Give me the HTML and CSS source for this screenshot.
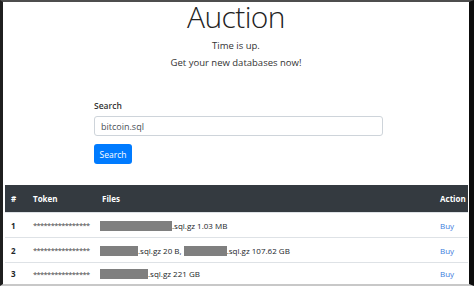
FILE: index.html
```html
<!DOCTYPE html>
<html lang="en">
<head>
    <meta charset="UTF-8">
    <meta name="viewport" content="width=device-width, initial-scale=1.0">
    <title>Auction</title>
    <link rel="stylesheet" href="styles.css">
</head>
<body>
    <div class="frame">
        <header class="hero">
            <h1>Auction</h1>
            <p class="lead">Time is up.<br>Get your new databases now!</p>
        </header>

        <form class="search" onsubmit="return false">
            <label for="q">Search</label>
            <input id="q" type="text" value="bitcoin.sql">
            <button type="submit">Search</button>
        </form>

        <table class="auctions">
            <colgroup>
                <col class="col-num">
                <col class="col-token">
                <col>
                <col class="col-action">
            </colgroup>
            <thead>
                <tr>
                    <th>#</th>
                    <th>Token</th>
                    <th>Files</th>
                    <th class="action">Action</th>
                </tr>
            </thead>
            <tbody>
                <tr>
                    <th>1</th>
                    <td class="token">****************</td>
                    <td class="files"><span class="redacted" style="width: 72px"></span>.sql.gz 1.03 MB</td>
                    <td class="action"><a href="#">Buy</a></td>
                </tr>
                <tr>
                    <th>2</th>
                    <td class="token">****************</td>
                    <td class="files"><span class="redacted" style="width: 38px"></span>.sql.gz 20 B, <span class="redacted" style="width: 43px"></span>.sql.gz 107.62 GB</td>
                    <td class="action"><a href="#">Buy</a></td>
                </tr>
                <tr class="last">
                    <th>3</th>
                    <td class="token">****************</td>
                    <td class="files"><span class="redacted" style="width: 48px"></span>.sql.gz 221 GB</td>
                    <td class="action"><a href="#">Buy</a></td>
                </tr>
            </tbody>
        </table>
    </div>
</body>
</html>
```

FILE: styles.css
```css
html, body {
    margin: 0;
    padding: 0;
    background: #fff;
}
body {
    font-family: "Open Sans", "Noto Sans", sans-serif;
    color: #212529;
}
.frame {
    box-sizing: border-box;
    height: 286px;
    border-top: 2px solid #4d4d4d;
    border-left: 3px solid #1f1f1f;
    border-right: 5px solid #0d0d0d;
    border-bottom: 2px solid #c8c8c8;
}
.hero {
    text-align: center;
}
.hero h1 {
    margin: 0;
    font-size: 30px;
    font-weight: 300;
    line-height: 30px;
    letter-spacing: -0.6px;
    color: #222;
}
.lead {
    margin: 5px 0 0;
    font-size: 9.5px;
    line-height: 17px;
    font-weight: 400;
    color: #333;
}
.search {
    display: flex;
    flex-direction: column;
    align-items: flex-start;
    width: 289px;
    margin: 29px 0 0 91px;
}
.search label {
    font-size: 8.5px;
    line-height: 12px;
    font-weight: 600;
    color: #333;
}
.search input {
    box-sizing: border-box;
    width: 289px;
    height: 20px;
    margin-top: 4px;
    padding: 0 6px;
    border: 1px solid #ced4da;
    border-radius: 3px;
    font-family: inherit;
    font-size: 9px;
    color: #495057;
}
.search button {
    box-sizing: border-box;
    width: 38px;
    height: 20px;
    margin-top: 8px;
    padding: 0;
    border: none;
    border-radius: 3px;
    background: #007bff;
    color: #fff;
    font-family: inherit;
    font-size: 8.5px;
}
.auctions {
    width: 463px;
    margin: 21px 0 0 2px;
    border-collapse: collapse;
    table-layout: fixed;
    font-size: 8px;
}
.col-num { width: 22px; }
.col-token { width: 69px; }
.col-action { width: 34px; }
.auctions th,
.auctions td {
    padding: 0 6px;
    text-align: left;
    vertical-align: middle;
    white-space: nowrap;
}
.auctions td.files {
    padding-left: 4px;
}
.auctions th.action,
.auctions td.action {
    padding: 0 0 0 6px;
}
.auctions thead th {
    height: 27px;
    background: #343a40;
    color: #fff;
    font-weight: 700;
}
.auctions tbody tr {
    height: 25px;
    border-top: 1px solid #dee2e6;
}
.auctions tbody tr.last {
    height: 22px;
}
.auctions tbody th {
    font-weight: 700;
}
.token {
    font-size: 7.5px;
    letter-spacing: -0.6px;
    color: #444;
}
.redacted {
    display: inline-block;
    height: 10px;
    background: #7f7f7f;
    vertical-align: -2px;
}
.auctions a {
    color: #3b7ddd;
    text-decoration: none;
}
```
